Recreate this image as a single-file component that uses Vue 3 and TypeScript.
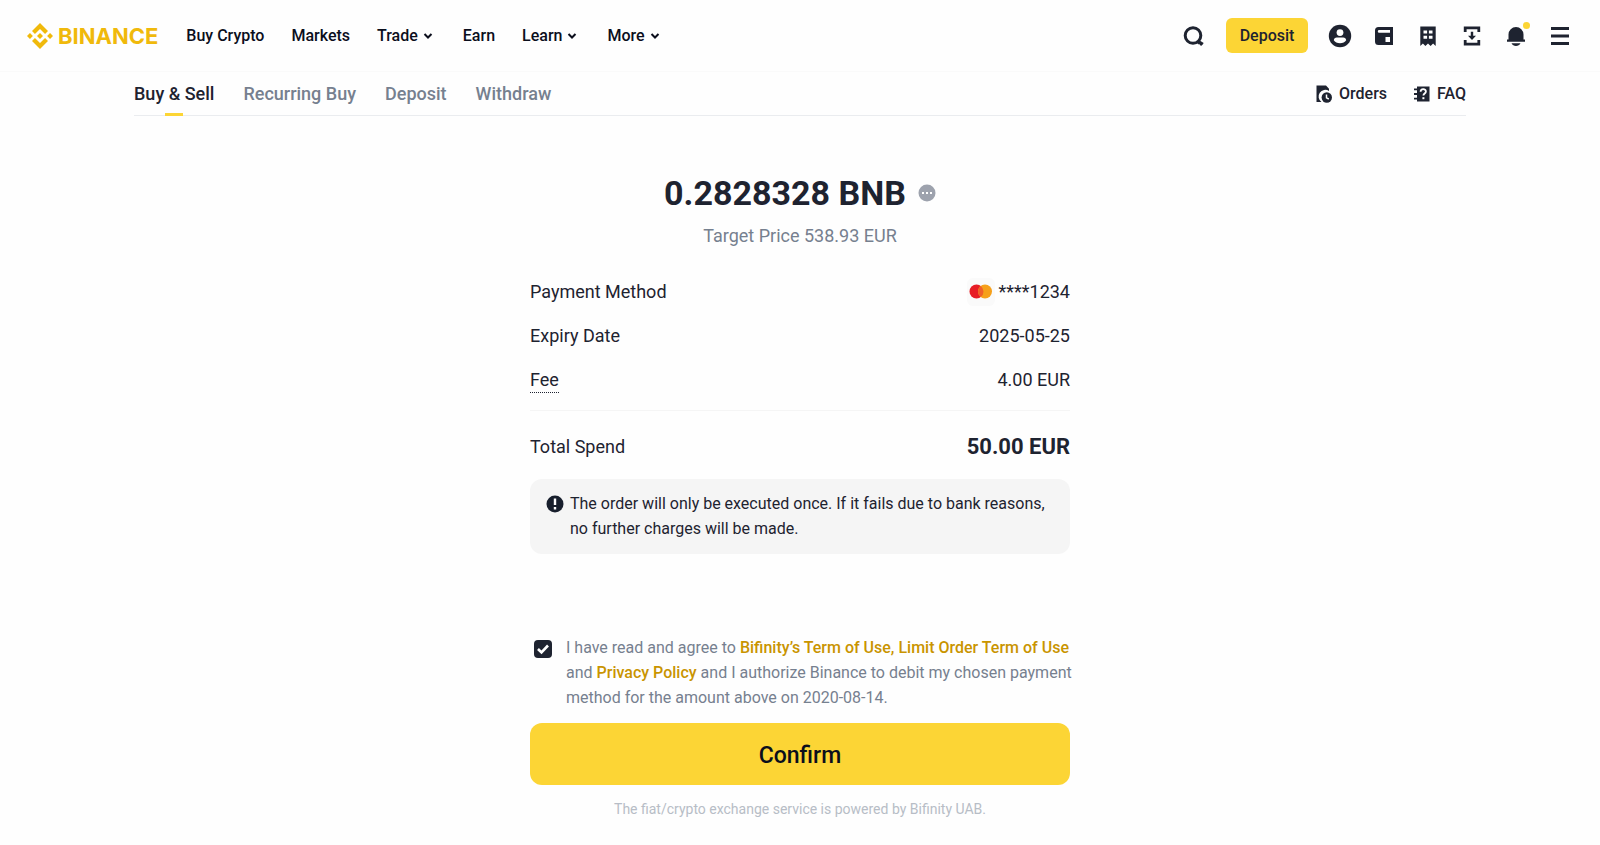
<script setup lang="ts">
import { ref } from 'vue'

interface NavItem {
  label: string
  menu: boolean
}

const navItems: NavItem[] = [
  { label: 'Buy Crypto', menu: false },
  { label: 'Markets', menu: false },
  { label: 'Trade', menu: true },
  { label: 'Earn', menu: false },
  { label: 'Learn', menu: true },
  { label: 'More', menu: true },
]

const tabs: string[] = ['Buy & Sell', 'Recurring Buy', 'Deposit', 'Withdraw']
const activeTab = ref<string>('Buy & Sell')
const agreed = ref<boolean>(true)
</script>

<template>
  <div class="page">
    <header class="topbar">
      <a class="brand" href="#" aria-label="Binance home">
        <svg class="brand-mark" viewBox="0 0 126.61 126.61" aria-hidden="true">
          <path d="M38.73 53.2 63.31 28.62 87.9 53.21 102.2 38.91 63.31 0 24.43 38.9z" />
          <path d="M0 63.31 14.3 49.01 28.6 63.31 14.3 77.61z" />
          <path d="M38.73 73.41 63.31 97.99 87.9 73.4 102.21 87.69 63.31 126.61 24.41 87.71z" />
          <path d="M98 63.31 112.3 49.01 126.61 63.31 112.31 77.61z" />
          <path d="M77.83 63.3 63.31 48.78 48.78 63.31 63.31 77.82z" />
        </svg>
        <span class="brand-name">BINANCE</span>
      </a>

      <nav class="main-nav" aria-label="Main">
        <a v-for="item in navItems" :key="item.label" class="nav-link" href="#">
          {{ item.label }}
          <svg v-if="item.menu" class="chevron" viewBox="0 0 16 16" aria-hidden="true">
            <path d="M4.5 6 8 9.5 11.5 6" />
          </svg>
        </a>
      </nav>

      <div class="actions">
        <button class="icon-button" type="button" aria-label="Search">
          <svg viewBox="0 0 24 24" aria-hidden="true">
            <circle cx="11" cy="11.5" r="7.8" fill="none" stroke="currentColor" stroke-width="3" />
            <path d="M15.5 19.5 17 18 20 21.200M17 17.500 21 20" fill="none" stroke="currentColor" stroke-width="2.600" />
          </svg>
        </button>
        <button class="deposit" type="button">Deposit</button>
        <button class="icon-button" type="button" aria-label="Account">
          <svg viewBox="0 0 24 24" aria-hidden="true">
            <circle cx="12" cy="12" r="11.2" fill="currentColor" />
            <circle cx="12" cy="8.6" r="3.4" fill="#fff" />
            <path d="M5.8 16.200c0-1.700 1.300-2.800 3-2.800h6.400c1.700 0 3 1.100 3 2.800-1.200 1.900-3.500 3-6.200 3s-5-1.100-6.200-3z" fill="#fff" />
          </svg>
        </button>
        <button class="icon-button" type="button" aria-label="Wallet">
          <svg viewBox="0 0 24 24" aria-hidden="true">
            <path d="M6.500 3H21v18H6.500A3.500 3.500 0 0 1 3 17.500v-11A3.500 3.500 0 0 1 6.500 3z" fill="currentColor" />
            <path d="M7.200 6H18v2.800H7.200a1.400 1.400 0 0 1 0-2.800zM13.500 13H18v5h-4.500z" fill="#fff" />
          </svg>
        </button>
        <button class="icon-button" type="button" aria-label="Orders">
          <svg viewBox="0 0 24 24" aria-hidden="true">
            <path d="M4.300 2.500h15.400V22l-2.600-2.400L14.600 22 12 19.600 9.400 22l-2.500-2.400L4.300 22z" fill="currentColor" />
            <path d="M7.500 6.500h3.600v3H7.500zM12.900 6.500h3.600v3h-3.600zM7.500 11.800h3.600v3H7.500zM12.900 11.800h3.600v3h-3.600z" fill="#fff" />
          </svg>
        </button>
        <button class="icon-button" type="button" aria-label="Downloads">
          <svg viewBox="0 0 24 24" aria-hidden="true">
            <path d="M5.200 8V3.800h13.600V8M5.200 16v4.200h13.600V16" fill="none" stroke="currentColor" stroke-width="2.800" />
            <path d="M10.800 7.800h2.400v4H16L12 16l-4-4.200h2.800z" fill="currentColor" />
          </svg>
        </button>
        <button class="icon-button bell" type="button" aria-label="Notifications">
          <svg viewBox="0 0 24 24" aria-hidden="true">
            <path d="M4.500 15.500v-5a7.500 7.500 0 0 1 15 0v5H21v2.300H3v-2.300zM7.500 19.300h9c-.9 1.700-2.500 2.700-4.500 2.700s-3.600-1-4.500-2.700z" fill="currentColor" />
          </svg>
          <span class="bell-dot"></span>
        </button>
        <button class="icon-button" type="button" aria-label="Menu">
          <svg viewBox="0 0 24 24" aria-hidden="true">
            <path d="M3 4.500h18M3 12h18M3 19.500h18" fill="none" stroke="currentColor" stroke-width="3" />
          </svg>
        </button>
      </div>
    </header>

    <div class="subnav">
      <nav class="tabs" aria-label="Buy and sell">
        <a
          v-for="tab in tabs"
          :key="tab"
          href="#"
          class="tab"
          :class="{ active: tab === activeTab }"
          @click.prevent="activeTab = tab"
          >{{ tab }}</a
        >
      </nav>
      <div class="help-links">
        <a class="help-link" href="#">
          <svg viewBox="0 0 18 18" aria-hidden="true">
            <path d="M1.500 .5h9.500L14 3.700V6A6.500 6.500 0 0 0 6.500 17h-5z" fill="currentColor" />
            <circle cx="11.800" cy="12.500" r="5.200" fill="currentColor" />
            <path d="M11.500 9.500v3.300l2.300 1.200" fill="none" stroke="#fff" stroke-width="1.500" />
          </svg>
          Orders
        </a>
        <a class="help-link" href="#">
          <svg viewBox="0 0 18 18" aria-hidden="true">
            <path d="M4 1.500h12.500v15H4zM1 3.500h3v1.800H1zM1 8.100h3v1.800H1zM1 12.700h3v1.800H1z" fill="currentColor" />
            <path d="M7.600 6.800c0-3.400 5.300-3.400 5.300-.3 0 2-2.500 1.900-2.500 4" fill="none" stroke="#fff" stroke-width="1.800" />
            <path d="M9.400 12.200h2v2h-2z" fill="#fff" />
          </svg>
          FAQ
        </a>
      </div>
    </div>

    <main class="order">
      <div class="amount">
        <h1>0.2828328 BNB</h1>
        <button class="more-button" type="button" aria-label="Order details">
          <svg viewBox="0 0 18 18" aria-hidden="true">
            <circle cx="9" cy="9" r="8.500" fill="#9da2ad" />
            <path d="M4 8h2v2H4zM8 8h2v2H8zM12 8h2v2h-2z" fill="#fff" />
          </svg>
        </button>
      </div>
      <p class="target">Target Price 538.93 EUR</p>

      <dl class="details">
        <div class="row">
          <dt>Payment Method</dt>
          <dd class="card">
            <svg class="card-logo" viewBox="0 0 28 28" role="img" aria-label="Mastercard">
              <rect width="28" height="28" rx="6" fill="#fafafa" />
              <circle cx="9.500" cy="13.500" r="7" fill="#e71d25" />
              <circle cx="18" cy="13.500" r="7" fill="#f6a01a" />
              <path d="M13.750 7.930a7 7 0 0 1 0 11.140 7 7 0 0 1 0-11.140z" fill="#f0602a" />
            </svg>
            ****1234
          </dd>
        </div>
        <div class="row">
          <dt>Expiry Date</dt>
          <dd>2025-05-25</dd>
        </div>
        <div class="row">
          <dt><span class="hint">Fee</span></dt>
          <dd>4.00 EUR</dd>
        </div>
        <div class="row total">
          <dt>Total Spend</dt>
          <dd>50.00 EUR</dd>
        </div>
      </dl>

      <div class="notice">
        <svg viewBox="0 0 18 18" aria-hidden="true">
          <circle cx="9" cy="9" r="8.500" fill="#181f2d" />
          <path d="M7.800 3.500h2.400v6.500H7.800zM7.800 12h2.400v2.400H7.800z" fill="#fff" />
        </svg>
        <p>The order will only be executed once. If it fails due to bank reasons,<br />no further charges will be made.</p>
      </div>

      <div class="consent">
        <input id="agree" v-model="agreed" type="checkbox" />
        <label for="agree">
          I have read and agree to <a href="#">Bifinity’s Term of Use,</a> <a href="#">Limit Order Term of Use</a><br />
          and <a href="#">Privacy Policy</a> and I authorize Binance to debit my chosen payment<br />
          method for the amount above on 2020-08-14.
        </label>
      </div>

      <button class="confirm" type="button" :disabled="!agreed">Confirm</button>
      <p class="footnote">The fiat/crypto exchange service is powered by Bifinity UAB.</p>
    </main>
  </div>
</template>

<style>
body {
  margin: 0;
  background: #fefefe;
}
</style>

<style scoped>
.page {
  font-family: Roboto, "Liberation Sans", sans-serif;
  color: #1e2330;
  font-size: 16px;
  line-height: 24px;
}

a {
  color: inherit;
  text-decoration: none;
}

button {
  padding: 0;
  border: 0;
  background: none;
  color: inherit;
  font: inherit;
  cursor: pointer;
}

h1,
p,
dl,
dd {
  margin: 0;
}

.topbar {
  display: flex;
  align-items: center;
  box-sizing: border-box;
  height: 72px;
  padding: 0 28px 0 27px;
  border-bottom: 1px solid #fafafa;
}

.brand {
  display: flex;
  align-items: center;
  gap: 5px;
  margin-right: 28px;
  color: #f0b90b;
}

.brand-mark {
  width: 26px;
  height: 26px;
  fill: currentColor;
}

.brand-name {
  font-family: Inter, sans-serif;
  font-size: 22px;
  font-weight: 700;
}

.main-nav {
  display: flex;
  gap: 27px;
  color: #0b0e1c;
  font-weight: 500;
}

.nav-link {
  display: flex;
  align-items: center;
  gap: 2px;
}

.chevron {
  width: 16px;
  height: 16px;
  fill: none;
  stroke: currentColor;
  stroke-width: 2;
}

.actions {
  display: flex;
  align-items: center;
  gap: 20px;
  margin-left: auto;
}

.icon-button {
  width: 24px;
  height: 24px;
}

.icon-button svg {
  display: block;
  width: 24px;
  height: 24px;
}

.bell {
  position: relative;
}

.bell-dot {
  position: absolute;
  top: -2px;
  right: -2px;
  width: 7px;
  height: 7px;
  border-radius: 50%;
  background: #fcd535;
}

.deposit {
  width: 82px;
  height: 35px;
  border-radius: 6px;
  background: #fcd535;
  font-weight: 500;
}

.subnav {
  display: flex;
  justify-content: space-between;
  max-width: 1332px;
  margin: 0 auto;
  border-bottom: 1px solid #eaecef;
}

.tabs {
  display: flex;
  gap: 29px;
}

.help-links {
  display: flex;
  gap: 26px;
}

.tab {
  position: relative;
  padding: 10px 0 9px;
  color: #76808f;
  font-size: 18px;
  font-weight: 500;
}

.tab.active {
  color: #1e2330;
}

.tab.active::after {
  content: "";
  position: absolute;
  bottom: -1px;
  left: 50%;
  width: 18px;
  height: 3px;
  margin-left: -9px;
  background: #fcd535;
}

.help-link {
  display: flex;
  align-items: center;
  gap: 6px;
  font-weight: 500;
}

.help-link svg {
  width: 18px;
  height: 18px;
}

.order {
  max-width: 540px;
  margin: 0 auto;
  padding: 55px 0 24px;
}

.amount {
  display: flex;
  align-items: center;
  justify-content: center;
  gap: 12px;
}

h1 {
  font-size: 34px;
  font-weight: 700;
  line-height: 44px;
}

.more-button svg {
  display: block;
  width: 18px;
  height: 18px;
}

.target {
  margin-top: 9px;
  color: #76808f;
  font-size: 18px;
  text-align: center;
}

.details {
  padding-top: 32px;
  font-size: 18px;
}

.row {
  display: flex;
  align-items: center;
  justify-content: space-between;
  height: 24px;
}

.row + .row {
  margin-top: 20px;
}

.card {
  display: flex;
  align-items: center;
  gap: 4px;
}

.card-logo {
  width: 28px;
  height: 28px;
}

.hint {
  display: block;
  border-bottom: 1px dotted #1e2330;
}

.row.total {
  height: 64px;
  margin-top: 18px;
  padding-top: 4px;
  border-top: 1px solid #f5f5f5;
}

.total dd {
  font-size: 22px;
  font-weight: 700;
}

.notice {
  display: flex;
  gap: 6px;
  padding: 12px 16px 13px;
  border-radius: 12px;
  background: #f5f5f5;
  line-height: 25px;
}

.notice svg {
  flex: none;
  width: 18px;
  height: 18px;
  margin-top: 4px;
}

.notice p {
  white-space: nowrap;
}

.consent {
  display: flex;
  gap: 14px;
  margin-top: 81px;
  padding-left: 4px;
  color: #76808f;
  line-height: 25px;
}

.consent input {
  flex: none;
  width: 18px;
  height: 18px;
  margin: 5px 0 0;
  border-radius: 4px;
  appearance: none;
  background: #fff;
  box-shadow: inset 0 0 0 2px #1e2330;
}

.consent input:checked {
  background: #1e2330 url("data:image/svg+xml,%3Csvg xmlns='http://www.w3.org/2000/svg' viewBox='0 0 18 18'%3E%3Cpath d='M4 9l3.500 3.500L14 5.500' fill='none' stroke='white' stroke-width='2.600'/%3E%3C/svg%3E") center / 18px 18px;
}

.consent label {
  white-space: nowrap;
}

.consent a {
  color: #c99400;
  font-weight: 500;
}

.confirm {
  display: block;
  width: 100%;
  height: 62px;
  margin-top: 13px;
  padding-top: 3px;
  border-radius: 12px;
  background: #fcd535;
  color: #0b0e1c;
  font-size: 23px;
  font-weight: 500;
}

.footnote {
  margin-top: 12px;
  color: #b7bdc6;
  font-size: 14px;
  text-align: center;
}
</style>
